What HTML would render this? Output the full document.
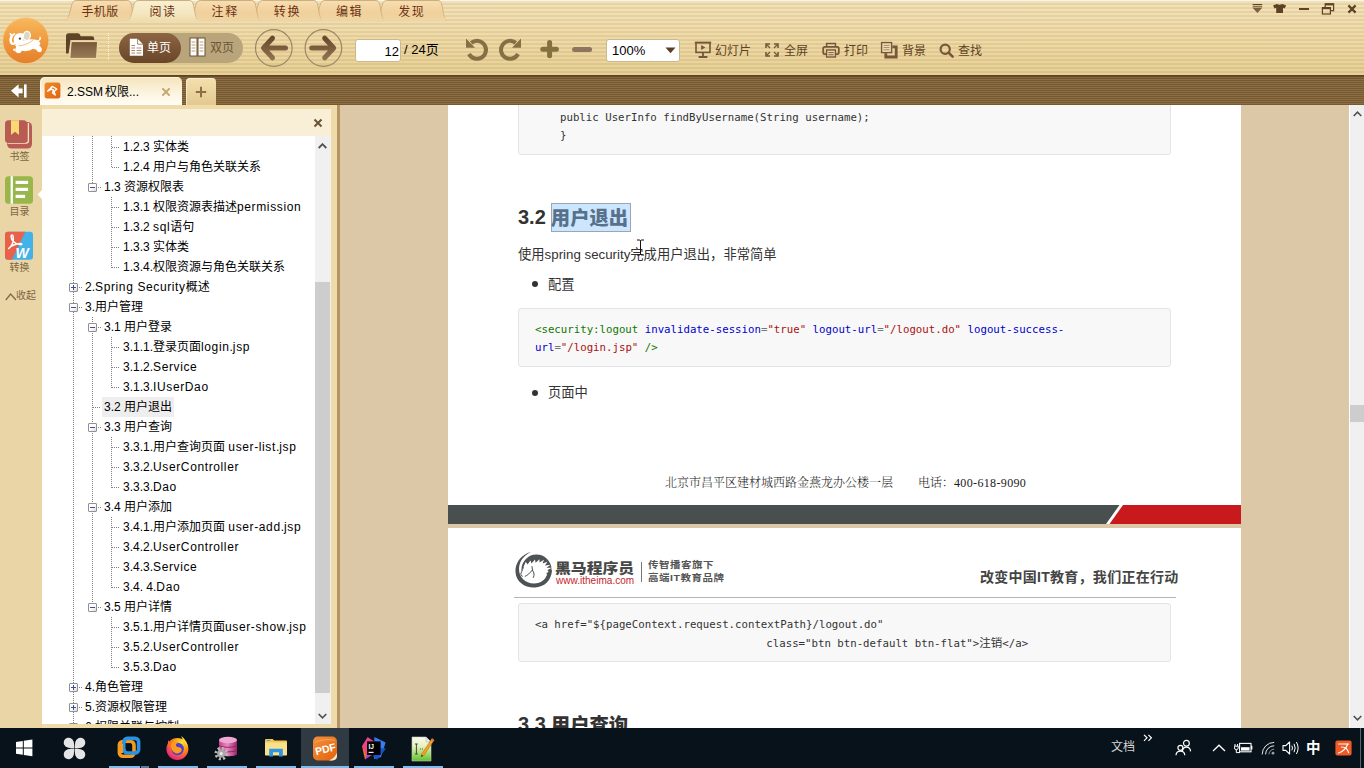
<!DOCTYPE html>
<html lang="zh-CN">
<head>
<meta charset="utf-8">
<title>2.SSM权限</title>
<style>
*{box-sizing:border-box;margin:0;padding:0}
html,body{width:1364px;height:768px;overflow:hidden;background:#dcc7a6}
body{position:relative;font-family:"Liberation Sans","Noto Sans CJK SC",sans-serif;font-size:13px;color:#000}
.abs{position:absolute}
/* ---------- top toolbar ---------- */
#toolbar{position:absolute;left:0;top:0;width:1364px;height:75px;
 background:
  linear-gradient(180deg,#f9f5e6 0,#f9f5e6 1px,transparent 1px),
  repeating-linear-gradient(180deg,rgba(255,255,255,.13) 0,rgba(255,255,255,.13) 2px,rgba(170,115,20,.09) 2px,rgba(170,115,20,.09) 4px) 0 1px,
  linear-gradient(180deg,#efdeb2 0,#ecd8a7 25px,#e7d097 55px,#e2c98c 75px);}
#tabbar{position:absolute;left:0;top:75px;width:1364px;height:30px;
 background:
  linear-gradient(180deg,#5e4420 0,#5e4420 1px,rgba(94,68,32,.35) 2px,transparent 3px),
  repeating-linear-gradient(180deg,#8b6e46 0,#8b6e46 1px,#77592f 1px,#77592f 2px);}
.mtab{position:absolute;top:0;height:21px;width:70px;font-size:13px;color:#6a3517;text-align:center;line-height:22px;letter-spacing:.5px}
.mtab svg{position:absolute;left:0;top:0}
.mtab span{position:relative}
.mt{position:absolute;top:3px;width:60px;height:18px;line-height:18px;text-align:center;font-size:12px;color:#6b3313;letter-spacing:.3px;white-space:nowrap}
.tl{position:absolute;top:42px;height:18px;line-height:18px;font-size:12px;color:#5e4224;white-space:nowrap}
/* ---------- left ---------- */
#side{position:absolute;left:0;top:105px;width:42px;height:623px;background:#e9d5a5}
#panelwrap{position:absolute;left:42px;top:105px;width:295px;height:623px;background:#efdba9}
#phead{position:absolute;left:0;top:4px;width:289px;height:27px;background:#f9efd6}
#tree{position:absolute;left:0;top:31px;width:289px;height:588px;background:#fff;overflow:hidden}
#split{position:absolute;left:337px;top:105px;width:3px;height:623px;background:#b59463}
.ti{position:absolute;height:20px;line-height:20px;font-size:13px;white-space:nowrap;color:#000;font-family:"Liberation Sans","Noto Sans CJK SC",sans-serif}

.vl{position:absolute;width:1px;background:repeating-linear-gradient(180deg,#808080 0,#808080 1px,transparent 1px,transparent 2px)}
.hl{position:absolute;height:1px;background:repeating-linear-gradient(90deg,#808080 0,#808080 1px,transparent 1px,transparent 2px)}
.bx{position:absolute;width:9px;height:9px;border:1px solid #919191;border-radius:1px;background:linear-gradient(135deg,#fff 0,#fff 50%,#d8d8d8 100%)}
.bx .mh{position:absolute;left:1px;top:3px;width:5px;height:1px;background:#3b4ea0}
.bx .mv{position:absolute;left:3px;top:1px;width:1px;height:5px;background:#3b4ea0}
.ti{font-size:12px}
.la{letter-spacing:.62px}
.ti.sel{background:#eee;margin-left:-2px;padding:0 2px}
.sb{position:absolute;background:#f0f0f0}
.sb .th{position:absolute;background:#cdcdcd}
.sl{position:absolute;left:0;width:39px;text-align:center;font-size:10px;line-height:16px;color:#7d6444;white-space:nowrap}
/* ---------- doc ---------- */
#doc{position:absolute;left:340px;top:105px;width:1008px;height:623px;background:#dcc7a6;overflow:hidden}
#vscroll{position:absolute;left:1349px;top:105px;width:15px;height:623px;background:#f0f0f0;border-left:1px solid #fff}

/* doc contents (screen coords via body-relative abs) */
.page{position:absolute;left:448px;width:793px;background:#fff}
.code{position:absolute;left:518px;width:653px;background:#f8f8f8;border:1px solid #e2e4e6;border-radius:3px}
.cl{position:absolute;font-family:"DejaVu Sans Mono","Liberation Mono","Noto Sans CJK SC",monospace;font-size:10.73px;line-height:18px;height:18px;white-space:pre;color:#333}
.eq{color:#777}.tg{color:#117700}.at{color:#0000cc}.st{color:#aa1111}
.p{position:absolute;font-size:13.3px;line-height:20px;height:20px;color:#333;white-space:nowrap;font-family:"Liberation Sans","Noto Sans CJK SC",sans-serif}
.h2{position:absolute;font-size:20px;line-height:28px;height:28px;font-weight:bold;color:#333;white-space:nowrap;font-family:"Liberation Sans","Noto Sans CJK SC",sans-serif}
.ft{height:16px;line-height:16px;font-size:12px;font-weight:300;color:#1a1a1a;white-space:pre;font-family:"Liberation Serif","Noto Serif CJK SC",serif}
.dot{position:absolute;width:6px;height:6px;border-radius:50%;background:#333}
/* ---------- taskbar ---------- */
.ul{position:absolute;top:38px;height:2px;background:#7dbcee}
#taskbar{position:absolute;left:0;top:728px;width:1364px;height:40px;background:#08121b}
</style>
</head>
<body>
<div id="toolbar">
<svg class="abs" style="left:0;top:0" width="460" height="23" viewBox="0 0 460 23">
<defs><linearGradient id="tgi" x1="0" y1="0" x2="0" y2="1"><stop offset="0" stop-color="#f7deb2"/><stop offset=".55" stop-color="#f1d09c"/><stop offset="1" stop-color="#edd6a4"/></linearGradient>
<linearGradient id="tga" x1="0" y1="0" x2="0" y2="1"><stop offset="0" stop-color="#f9f0d2"/><stop offset=".6" stop-color="#f4e6c0"/><stop offset="1" stop-color="#efdcac"/></linearGradient>
<linearGradient id="tgs" x1="0" y1="0" x2="0" y2="1"><stop offset="0" stop-color="#c9a773"/><stop offset=".7" stop-color="#c9a773" stop-opacity=".8"/><stop offset="1" stop-color="#c9a773" stop-opacity="0"/></linearGradient></defs>
<path d="M374.7,21.5 C378.2,21 379.2,16 380.7,11 C382.2,5 382.7,0.5 386.7,0.5 L438.0,0.5 C441.5,0.5 442.0,5 443.0,11 C444.0,16 445.0,21 448.0,21.5 Z" fill="url(#tgi)" stroke="url(#tgs)" stroke-width=".9"/>
<path d="M312.6,21.5 C316.1,21 317.1,16 318.6,11 C320.1,5 320.6,0.5 324.6,0.5 L375.9,0.5 C379.4,0.5 379.9,5 380.9,11 C381.9,16 382.9,21 385.9,21.5 Z" fill="url(#tgi)" stroke="url(#tgs)" stroke-width=".9"/>
<path d="M250.5,21.5 C254.0,21 255.0,16 256.5,11 C258.0,5 258.5,0.5 262.5,0.5 L313.8,0.5 C317.3,0.5 317.8,5 318.8,11 C319.8,16 320.8,21 323.8,21.5 Z" fill="url(#tgi)" stroke="url(#tgs)" stroke-width=".9"/>
<path d="M188.4,21.5 C191.9,21 192.9,16 194.4,11 C195.9,5 196.4,0.5 200.4,0.5 L251.7,0.5 C255.2,0.5 255.7,5 256.7,11 C257.7,16 258.7,21 261.7,21.5 Z" fill="url(#tgi)" stroke="url(#tgs)" stroke-width=".9"/>
<path d="M64.2,21.5 C67.7,21 68.7,16 70.2,11 C71.7,5 72.2,0.5 76.2,0.5 L127.5,0.5 C131.0,0.5 131.5,5 132.5,11 C133.5,16 134.5,21 137.5,21.5 Z" fill="url(#tgi)" stroke="url(#tgs)" stroke-width=".9"/>
<path d="M126.30000000000001,21.5 C129.8,21 130.8,16 132.3,11 C133.8,5 134.3,0.5 138.3,0.5 L189.6,0.5 C193.1,0.5 193.6,5 194.6,11 C195.6,16 196.6,21 199.6,21.5 Z" fill="url(#tga)" stroke="url(#tgs)" stroke-width=".9"/>
</svg>
<div class="mt" style="left:70.0px">手机版</div>
<div class="mt" style="left:132.2px;letter-spacing:1.6px;text-indent:1.6px">阅读</div>
<div class="mt" style="left:194.4px;letter-spacing:1.6px;text-indent:1.6px">注释</div>
<div class="mt" style="left:256.6px;letter-spacing:1.6px;text-indent:1.6px">转换</div>
<div class="mt" style="left:318.8px;letter-spacing:1.6px;text-indent:1.6px">编辑</div>
<div class="mt" style="left:381.0px;letter-spacing:1.6px;text-indent:1.6px">发现</div>
<!-- elephant logo -->
<svg class="abs" style="left:1px;top:15px" width="50" height="51" viewBox="0 0 50 51">
 <defs><linearGradient id="eg" x1="0" y1="0" x2="0" y2="1"><stop offset="0" stop-color="#f7b95c"/><stop offset=".5" stop-color="#f09a3e"/><stop offset="1" stop-color="#e4802c"/></linearGradient></defs>
 <circle cx="24.8" cy="25.6" r="23.6" fill="#f3c88a" opacity=".55"/>
 <circle cx="24.8" cy="25.6" r="22.6" fill="url(#eg)"/>
 <g fill="#fff">
  <ellipse cx="17.6" cy="24.8" rx="5" ry="5.6"/>
  <path d="M14,20.6 C15.5,18 19,17.4 22,18.6 L22,24 Z"/>
  <path d="M14,30.5 C17,27 24,24.5 30,24.2 C34,24 37.5,25 39,27.5 C40,29.5 38,31 36,31.5 L30,34.8 C26,36.8 21.5,36.4 19,35 Z"/>
  <path d="M16.4,30.6 C14.6,32.4 13.6,34.6 14.6,36.6 C15.6,38.4 18.6,38.8 19.8,37.6 C20.4,36 21.8,34.6 24,33.6 Z"/>
  <path d="M33.6,29 C36.4,29 38.4,30.4 39.8,32 C41.4,34 41.2,36.4 39.6,37 C37.8,37.6 36,36.4 35.4,34.8 L31,33.4 Z"/>
  <path d="M13.4,33.4 C12.2,33.2 11.6,34.4 12.4,35.4 L15,36.4 Z"/>
 </g>
 <path d="M13.6,28.6 C9.4,29.6 8.6,24.8 10.9,20.6" fill="none" stroke="#fff" stroke-width="2.5" stroke-linecap="round"/>
 <path d="M11,20.8 L9.3,18.9 M11,20.8 L13.2,19" fill="none" stroke="#fff" stroke-width="1.7" stroke-linecap="round"/>
 <path d="M36.8,26 C38.8,25.2 39.8,23.8 39,22.4" fill="none" stroke="#fff" stroke-width="1.5" stroke-linecap="round"/>
 <ellipse cx="25.8" cy="20.9" rx="3.5" ry="4.5" fill="#ddd5c6" stroke="#fff" stroke-width="1.3" transform="rotate(10 25.8 20.9)"/>
 <circle cx="18.9" cy="23.7" r="1.15" fill="#5a4630"/>
 <path d="M17.5,30.8 C22,30.8 28,28.6 32.5,24.6" fill="none" stroke="#f0a04a" stroke-width=".7"/>
</svg>
<!-- folder -->
<svg class="abs" style="left:64px;top:31px" width="36" height="30" viewBox="0 0 36 30">
 <defs><linearGradient id="fg" x1="0" y1="0" x2="0" y2="1"><stop offset="0" stop-color="#76583a"/><stop offset="1" stop-color="#9b7c58"/></linearGradient></defs>
 <path d="M2,22.5 V5 Q2,2.2 4.8,2.2 H14 Q15.6,2.2 16.2,4 L16.6,5.2 H28 Q30.2,5.2 30.2,7.4 V9 H6.5 L4.6,22.5 Z" fill="#5f4329"/>
 <path d="M7.2,10.6 H33.6 L32.6,27.4 H5.8 Z" fill="url(#fg)" stroke="#f1dfb2" stroke-width="1"/>
</svg>
<div class="abs" style="left:108px;top:33px;width:1px;height:27px;background:repeating-linear-gradient(180deg,#fbf3da 0,#fbf3da 1px,transparent 1px,transparent 2px)"></div>
<!-- single / double page pill -->
<div class="abs" style="left:119px;top:33px;width:124px;height:30px;border-radius:15px;background:#b9a57c"></div>
<div class="abs" style="left:119px;top:33px;width:62px;height:30px;border-radius:15px;background:linear-gradient(180deg,#8d6644 0,#7a5536 50%,#6a4628 100%)"></div>
<svg class="abs" style="left:129px;top:38px" width="15" height="19" viewBox="0 0 15 19"><path d="M0.8,0.8 H8.6 L14,6.2 V17.8 H0.8 Z" fill="#fff"/><path d="M8.6,0.8 V6.2 H14" fill="none" stroke="#8b6645" stroke-width=".8"/><g stroke="#a88a6a" stroke-width="1"><path d="M2.4,7.5 H6 M2.4,10 H6 M2.4,12.5 H6 M2.4,15 H6 M7.6,10 H12.4 M7.6,12.5 H12.4 M7.6,15 H12.4"/></g></svg>
<div class="abs" style="left:147px;top:39px;font-size:12px;line-height:18px;color:#fff;white-space:nowrap">单页</div>
<svg class="abs" style="left:189px;top:37px" width="17" height="20" viewBox="0 0 17 20"><rect x="1" y="1" width="7" height="18" fill="#fff" stroke="#6d5030" stroke-width="1"/><rect x="9" y="1" width="7" height="18" fill="#fff" stroke="#6d5030" stroke-width="1"/><g stroke="#b89c7a" stroke-width="1"><path d="M2.6,5 H6.4 M2.6,8 H6.4 M2.6,11 H6.4 M2.6,14 H6.4 M10.6,5 H14.4 M10.6,8 H14.4 M10.6,11 H14.4 M10.6,14 H14.4"/></g></svg>
<div class="abs" style="left:210px;top:39px;font-size:12px;line-height:18px;color:#6b5536;white-space:nowrap">双页</div>
<!-- back / forward -->
<svg class="abs" style="left:253px;top:28px" width="92" height="40" viewBox="0 0 92 40">
 <defs><linearGradient id="ag" x1="0" y1="0" x2="0" y2="1"><stop offset="0" stop-color="#6a4a2e"/><stop offset="1" stop-color="#8e7050"/></linearGradient></defs>
 <circle cx="20.8" cy="20" r="18.3" fill="none" stroke="#9c8664" stroke-width="1.2"/>
 <circle cx="70.4" cy="20" r="18.3" fill="none" stroke="#9c8664" stroke-width="1.2"/>
 <path d="M32.5,20 H12 M19.5,10.2 L10.5,20 L19.5,29.8" fill="none" stroke="url(#ag)" stroke-width="5" stroke-linecap="round" stroke-linejoin="round"/>
 <path d="M58.7,20 H79.2 M71.7,10.2 L80.7,20 L71.7,29.8" fill="none" stroke="url(#ag)" stroke-width="5" stroke-linecap="round" stroke-linejoin="round"/>
</svg>
<!-- page input -->
<div class="abs" style="left:355px;top:39px;width:46px;height:23px;background:#fff;border:1px solid #cbb98e;border-radius:3px"></div>
<div class="abs" style="left:355px;top:43px;width:44px;text-align:right;font-size:13px;line-height:18px;color:#000">12</div>
<div class="abs" style="left:404px;top:41px;font-size:13px;line-height:18px;color:#000;white-space:nowrap">/ 24页</div>
<!-- rotate, plus, minus -->
<svg class="abs" style="left:463px;top:36px" width="132" height="28" viewBox="0 0 132 28">
 <g fill="none" stroke="#857045" stroke-width="4">
  <path d="M6,18 A9,9 0 1 0 8.2,6.9"/>
  <path d="M55,18 A9,9 0 1 1 52.8,6.9"/>
 </g>
 <polygon points="3,2.6 3,11.8 12,11.8" fill="#857045"/>
 <polygon points="58,2.6 58,11.8 49,11.8" fill="#857045"/>
 <path d="M86.6,6.6 V19.8 M79.8,13.2 H93.4" stroke="#857040" stroke-width="5" stroke-linecap="round" fill="none"/>
 <path d="M111.6,13.6 H126.6" stroke="#8d765c" stroke-width="5" stroke-linecap="round" fill="none"/>
</svg>
<!-- zoom select -->
<div class="abs" style="left:606px;top:39px;width:74px;height:23px;background:#fff;border:1px solid #cbb98e;border-radius:3px"></div>
<div class="abs" style="left:612px;top:42px;font-size:13px;line-height:18px;color:#000;white-space:nowrap">100%</div>
<svg class="abs" style="left:665px;top:47px" width="11" height="7" viewBox="0 0 11 7"><polygon points="0.5,0.5 10.5,0.5 5.5,6.2" fill="#5a3f22"/></svg>
<!-- right tools -->
<svg class="abs" style="left:694px;top:41px" width="18" height="18" viewBox="0 0 18 18"><rect x="2" y="1.6" width="14" height="9.8" fill="none" stroke="#76573a" stroke-width="1.6"/><path d="M0.8,1.6 H17.2" stroke="#76573a" stroke-width="1.6"/><polygon points="7.2,4 7.2,9 11.4,6.5" fill="#76573a"/><path d="M9,11.4 V15.6 M4.6,16 H13.4" stroke="#76573a" stroke-width="1.8"/></svg>
<div class="tl" style="left:715px">幻灯片</div>
<svg class="abs" style="left:765px;top:43px" width="14" height="14" viewBox="0 0 14 14"><g fill="none" stroke="#76573a" stroke-width="1.6"><path d="M1,5 V1 H5 M9,1 H13 V5 M13,9 V13 H9 M5,13 H1 V9"/><path d="M1.5,1.5 L5,5 M12.5,1.5 L9,5 M12.5,12.5 L9,9 M1.5,12.5 L5,9" stroke-width="1.3"/></g></svg>
<div class="tl" style="left:784px">全屏</div>
<svg class="abs" style="left:822px;top:42px" width="18" height="16" viewBox="0 0 18 16"><path d="M4.6,5 V1.4 H13.4 V5" fill="none" stroke="#76573a" stroke-width="1.5"/><rect x="1.2" y="4.8" width="15.6" height="7.4" rx="1.6" fill="none" stroke="#76573a" stroke-width="1.8"/><rect x="4.6" y="8" width="8.8" height="7" fill="#ecd9a8" stroke="#76573a" stroke-width="1.4"/><path d="M6.4,10.6 H11.6 M6.4,12.8 H11.6" stroke="#76573a" stroke-width="1"/></svg>
<div class="tl" style="left:844px">打印</div>
<svg class="abs" style="left:880px;top:41px" width="18" height="18" viewBox="0 0 18 18"><path d="M5.8,12.2 V16 H16.2 V5.8 H12.4" fill="none" stroke="#76573a" stroke-width="2.8"/><rect x="1.6" y="1.6" width="10" height="10" fill="#f0dfb4" stroke="#76573a" stroke-width="1.4"/><path d="M3.6,4.4 H9.6 M3.6,6.6 H9.6 M3.6,8.8 H9.6" stroke="#9a7f5e" stroke-width=".9"/></svg>
<div class="tl" style="left:902px">背景</div>
<svg class="abs" style="left:939px;top:43px" width="15" height="15" viewBox="0 0 15 15"><circle cx="6.2" cy="6.2" r="4.6" fill="none" stroke="#76573a" stroke-width="2.2"/><path d="M9.6,9.6 L13.6,13.6" stroke="#76573a" stroke-width="2.6" stroke-linecap="round"/></svg>
<div class="tl" style="left:958px">查找</div>
<!-- window controls -->
<svg class="abs" style="left:1250px;top:2px" width="110" height="14" viewBox="0 0 110 14">
 <g fill="#5e4224"><rect x="2.6" y="2" width="9.6" height="1.2"/><rect x="2.6" y="4.2" width="9.6" height="1.2" opacity=".85"/><polygon points="2.8,6 12,6 7.4,11" opacity=".8"/>
 <path d="M26.8,2 L23,3.6 L24.6,6.4 L26.2,5.8 V11 H33 V5.8 L34.6,6.4 L36.2,3.6 L32.4,2 Q29.6,3.6 26.8,2 Z"/>
 <rect x="49" y="6" width="10" height="2"/>
 <rect x="97.6" y="0" width="0" height="0"/></g>
 <g fill="none" stroke="#5e4224"><path d="M75.2,5 V1.8 H83.6 V8.6 H80.6" stroke-width="1.2"/><path d="M75.2,2.4 H83.6" stroke-width="2"/><rect x="72.4" y="5.6" width="8" height="6.4" stroke-width="1.2"/><path d="M72.4,6.2 H80.4" stroke-width="2"/><path d="M98.4,3.4 L105.6,10.6 M105.6,3.4 L98.4,10.6" stroke-width="2.2"/></g>
</svg>
</div>
<div id="tabbar">
<svg class="abs" style="left:10px;top:8px" width="18" height="16" viewBox="0 0 18 16"><polygon points="1,7.8 8.6,1.2 8.6,5.4 12.6,5.4 12.6,10.2 8.6,10.2 8.6,14.4" fill="#fff"/><rect x="14" y="1.4" width="2.6" height="13.2" fill="#fff"/></svg>
<div class="abs" style="left:40px;top:2px;width:142px;height:28px;border-radius:5px 5px 0 0;background:linear-gradient(180deg,#f5e3ba 0,#f9eed2 35%,#fdf7e8 70%,#fffcf4 100%);box-shadow:inset 1px 1px 0 rgba(255,255,255,.5)"></div>
<svg class="abs" style="left:44px;top:7px" width="17" height="17" viewBox="0 0 17 17"><defs><linearGradient id="pg" x1="0" y1="0" x2="1" y2="1"><stop offset="0" stop-color="#f08a2c"/><stop offset="1" stop-color="#e0620c"/></linearGradient></defs><rect x="0.6" y="0.6" width="15.8" height="15.8" rx="2.6" fill="url(#pg)"/><path d="M3.6,9.2 L8.2,4.4 L12.8,7 L10,9.6 L11.2,13 L8.6,11 L9.4,8 L7.4,7.2 Z" fill="none" stroke="#fff" stroke-width="1.4" stroke-linejoin="round"/></svg>
<div class="abs" style="left:67px;top:8px;font-size:12px;line-height:18px;color:#000;white-space:nowrap">2.SSM<span style="margin-left:2px">权限...</span></div>
<svg class="abs" style="left:161px;top:12px" width="10" height="10" viewBox="0 0 10 10"><path d="M1.4,1.4 L8.6,8.6 M8.6,1.4 L1.4,8.6" stroke="#c3a56a" stroke-width="2" fill="none"/></svg>
<div class="abs" style="left:186px;top:3px;width:30px;height:27px;border-radius:4px 4px 0 0;background:linear-gradient(180deg,#f3e0ae 0,#ead29c 60%,#e3c98f 100%);box-shadow:inset 1px 1px 0 rgba(255,255,255,.45)"></div>
<svg class="abs" style="left:195px;top:11px" width="12" height="12" viewBox="0 0 12 12"><path d="M6,0.8 V11.2 M0.8,6 H11.2" stroke="#8c6f44" stroke-width="2" fill="none"/></svg>
</div>
<div id="side">
<svg class="abs" style="left:4px;top:14px" width="30" height="31" viewBox="0 0 30 31">
 <rect x="3" y="3" width="25" height="26.5" rx="4.5" fill="#b85b52"/>
 <path d="M3.5,24.2 H22 Q24.4,24.2 24.4,21.8 V4" fill="none" stroke="#f3e6c6" stroke-width="1.3"/>
 <rect x="1" y="1.3" width="22" height="22.6" rx="3.5" fill="#b85b52"/>
 <polygon points="7,1.3 15,1.3 15,16 11,12.8 7,16" fill="#f9d973"/>
</svg>
<div class="sl" style="top:44px">书签</div>
<svg class="abs" style="left:4px;top:70px" width="30" height="30" viewBox="0 0 30 30">
 <rect x="1" y="1.2" width="28" height="27.6" rx="3.5" fill="#98b649"/>
 <rect x="6.6" y="1.2" width="2.3" height="27.6" fill="#fff"/>
 <rect x="11.6" y="5.8" width="12.5" height="3.2" fill="#fff"/>
 <rect x="11.6" y="12.8" width="12.5" height="3.2" fill="#fff"/>
 <rect x="11.6" y="19.8" width="9.5" height="3.2" fill="#fff"/>
</svg>
<div class="sl" style="top:99px">目录</div>
<svg class="abs" style="left:4px;top:126px" width="30" height="30" viewBox="0 0 30 30">
 <defs><clipPath id="cvc"><rect x="1" y="0.8" width="28" height="28" rx="3"/></clipPath></defs>
 <g clip-path="url(#cvc)"><rect x="0" y="0" width="30" height="30" fill="#42b2e9"/><polygon points="0,0 21.5,0 7.5,30 0,30" fill="#e9614b"/></g>
 <path d="M4.6,17.6 C7.5,15.6 10.2,10.5 9.2,5.6 C8.8,3.6 7,3.5 7.1,5.5 C7.4,9.5 10.5,12.6 16,13.6 C18.5,14 18.4,12.4 16,12.5 C12,12.7 7.5,14.6 4.6,17.6 Z" fill="none" stroke="#fff" stroke-width="1.5" stroke-linejoin="round"/>
 <text x="11.5" y="26.5" font-family="Liberation Sans,sans-serif" font-size="14" font-weight="bold" font-style="italic" fill="#fff">W</text>
</svg>
<div class="sl" style="top:155px">转换</div>
<svg class="abs" style="left:5px;top:187px" width="12" height="10" viewBox="0 0 12 10"><path d="M0.8,8 L5.6,2 L11,8" fill="none" stroke="#7d6a48" stroke-width="1.3"/></svg>
<div class="sl" style="top:183px;left:16px;width:20px;text-align:left">收起</div>
</div>
<svg class="abs" style="left:37px;top:189px" width="6" height="11" viewBox="0 0 6 11"><polygon points="6,0 0.5,5.5 6,11" fill="#fff"/></svg>
<div id="panelwrap"><div id="phead"><svg class="abs" style="left:271px;top:9px" width="10" height="10" viewBox="0 0 10 10"><path d="M1.5,1.5 L8.5,8.5 M8.5,1.5 L1.5,8.5" stroke="#6b5435" stroke-width="2" fill="none"/></svg></div><div id="tree">
<i class="vl" style="left:31px;top:0px;height:588px"></i>
<i class="vl" style="left:50px;top:0px;height:51px"></i>
<i class="vl" style="left:50px;top:181px;height:290px"></i>
<i class="vl" style="left:69px;top:0px;height:32px"></i>
<i class="vl" style="left:69px;top:61px;height:71px"></i>
<i class="vl" style="left:69px;top:201px;height:51px"></i>
<i class="vl" style="left:69px;top:301px;height:51px"></i>
<i class="vl" style="left:69px;top:381px;height:71px"></i>
<i class="vl" style="left:69px;top:481px;height:51px"></i>
<i class="hl" style="left:70px;top:11px;width:8px"></i>
<div class="ti" style="left:81px;top:1px">1.2.3 实体类</div>
<i class="hl" style="left:70px;top:31px;width:8px"></i>
<div class="ti" style="left:81px;top:21px">1.2.4 用户与角色关联关系</div>
<i class="bx" style="left:46px;top:47px"><b class="mh"></b></i>
<i class="hl" style="left:56px;top:51px;width:4px"></i>
<div class="ti" style="left:62px;top:41px">1.3 资源权限表</div>
<i class="hl" style="left:70px;top:71px;width:8px"></i>
<div class="ti" style="left:81px;top:61px">1.3.1 权限资源表描述<span class="la">permission</span></div>
<i class="hl" style="left:70px;top:91px;width:8px"></i>
<div class="ti" style="left:81px;top:81px">1.3.2 <span class="la">sql</span>语句</div>
<i class="hl" style="left:70px;top:111px;width:8px"></i>
<div class="ti" style="left:81px;top:101px">1.3.3 实体类</div>
<i class="hl" style="left:70px;top:131px;width:8px"></i>
<div class="ti" style="left:81px;top:121px">1.3.4.权限资源与角色关联关系</div>
<i class="bx" style="left:27px;top:147px"><b class="mh"></b><b class="mv"></b></i>
<i class="hl" style="left:37px;top:151px;width:4px"></i>
<div class="ti" style="left:43px;top:141px">2.<span class="la">Spring Security</span>概述</div>
<i class="bx" style="left:27px;top:167px"><b class="mh"></b></i>
<i class="hl" style="left:37px;top:171px;width:4px"></i>
<div class="ti" style="left:43px;top:161px">3.用户管理</div>
<i class="bx" style="left:46px;top:187px"><b class="mh"></b></i>
<i class="hl" style="left:56px;top:191px;width:4px"></i>
<div class="ti" style="left:62px;top:181px">3.1 用户登录</div>
<i class="hl" style="left:70px;top:211px;width:8px"></i>
<div class="ti" style="left:81px;top:201px">3.1.1.登录页面<span class="la">login</span>.<span class="la">jsp</span></div>
<i class="hl" style="left:70px;top:231px;width:8px"></i>
<div class="ti" style="left:81px;top:221px">3.1.2.<span class="la">Service</span></div>
<i class="hl" style="left:70px;top:251px;width:8px"></i>
<div class="ti" style="left:81px;top:241px">3.1.3.<span class="la">IUserDao</span></div>
<i class="hl" style="left:51px;top:271px;width:8px"></i>
<div class="ti sel" style="left:62px;top:261px">3.2 用户退出</div>
<i class="bx" style="left:46px;top:287px"><b class="mh"></b></i>
<i class="hl" style="left:56px;top:291px;width:4px"></i>
<div class="ti" style="left:62px;top:281px">3.3 用户查询</div>
<i class="hl" style="left:70px;top:311px;width:8px"></i>
<div class="ti" style="left:81px;top:301px">3.3.1.用户查询页面 <span class="la">user-list</span>.<span class="la">jsp</span></div>
<i class="hl" style="left:70px;top:331px;width:8px"></i>
<div class="ti" style="left:81px;top:321px">3.3.2.<span class="la">UserController</span></div>
<i class="hl" style="left:70px;top:351px;width:8px"></i>
<div class="ti" style="left:81px;top:341px">3.3.3.<span class="la">Dao</span></div>
<i class="bx" style="left:46px;top:367px"><b class="mh"></b></i>
<i class="hl" style="left:56px;top:371px;width:4px"></i>
<div class="ti" style="left:62px;top:361px">3.4 用户添加</div>
<i class="hl" style="left:70px;top:391px;width:8px"></i>
<div class="ti" style="left:81px;top:381px">3.4.1.用户添加页面 <span class="la">user-add</span>.<span class="la">jsp</span></div>
<i class="hl" style="left:70px;top:411px;width:8px"></i>
<div class="ti" style="left:81px;top:401px">3.4.2.<span class="la">UserController</span></div>
<i class="hl" style="left:70px;top:431px;width:8px"></i>
<div class="ti" style="left:81px;top:421px">3.4.3.<span class="la">Service</span></div>
<i class="hl" style="left:70px;top:451px;width:8px"></i>
<div class="ti" style="left:81px;top:441px">3.4. 4.<span class="la">Dao</span></div>
<i class="bx" style="left:46px;top:467px"><b class="mh"></b></i>
<i class="hl" style="left:56px;top:471px;width:4px"></i>
<div class="ti" style="left:62px;top:461px">3.5 用户详情</div>
<i class="hl" style="left:70px;top:491px;width:8px"></i>
<div class="ti" style="left:81px;top:481px">3.5.1.用户详情页面<span class="la">user-show</span>.<span class="la">jsp</span></div>
<i class="hl" style="left:70px;top:511px;width:8px"></i>
<div class="ti" style="left:81px;top:501px">3.5.2.<span class="la">UserController</span></div>
<i class="hl" style="left:70px;top:531px;width:8px"></i>
<div class="ti" style="left:81px;top:521px">3.5.3.<span class="la">Dao</span></div>
<i class="bx" style="left:27px;top:547px"><b class="mh"></b><b class="mv"></b></i>
<i class="hl" style="left:37px;top:551px;width:4px"></i>
<div class="ti" style="left:43px;top:541px">4.角色管理</div>
<i class="bx" style="left:27px;top:567px"><b class="mh"></b><b class="mv"></b></i>
<i class="hl" style="left:37px;top:571px;width:4px"></i>
<div class="ti" style="left:43px;top:561px">5.资源权限管理</div>
<i class="bx" style="left:27px;top:587px"><b class="mh"></b><b class="mv"></b></i>
<i class="hl" style="left:37px;top:591px;width:4px"></i>
<div class="ti" style="left:43px;top:581px">6.权限关联与控制</div>
<div class="sb" style="left:273px;top:0;width:16px;height:588px"><div class="th" style="left:0;top:146px;width:15px;height:411px"></div>
<svg class="abs" style="left:3px;top:7px" width="9" height="6" viewBox="0 0 9 6"><path d="M0.7,5 L4.5,1.2 L8.3,5" fill="none" stroke="#505050" stroke-width="1.8"/></svg>
<svg class="abs" style="left:3px;top:577px" width="9" height="6" viewBox="0 0 9 6"><path d="M0.7,1 L4.5,4.8 L8.3,1" fill="none" stroke="#505050" stroke-width="1.6"/></svg></div>
</div></div>
<div id="split"></div>
<div id="doc"></div>

<!-- document pages -->
<div class="abs" style="left:0;top:105px;width:1349px;height:623px;overflow:hidden"><div class="abs" style="left:0;top:-105px;width:1364px;height:768px">
<div class="page" style="top:105px;height:400px"></div>
<div class="abs" style="left:448px;top:505px;width:793px;height:19px;background:#494e4e"></div>
<svg class="abs" style="left:1098px;top:505px" width="143" height="19" viewBox="0 0 143 19"><polygon points="21.5,0 143,0 143,19 8,19" fill="#fff"/><polygon points="25,0 143,0 143,19 11.5,19" fill="#c8191d"/></svg>
<div class="page" style="top:528px;height:200px"></div>

<div class="code" style="top:95px;height:60px"></div>
<div class="cl" style="left:560px;top:109px">public UserInfo findByUsername(String username);</div>
<div class="cl" style="left:560px;top:127px">}</div>

<div class="abs" style="left:551px;top:203px;width:80px;height:29px;background:#cce6ff;border:1px solid #9aa6b4"></div>
<div class="h2" style="left:518px;top:203px">3.2 <span style="color:#58718a;position:relative;top:1px;left:-.5px;font-size:19.3px;font-weight:900">用户退出</span></div>
<div class="p" style="left:518px;top:245px">使用spring security完成用户退出，非常简单</div>
<div class="dot" style="left:532px;top:281px"></div>
<div class="p" style="left:548px;top:275px">配置</div>

<div class="code" style="top:308px;height:59px"></div>
<div class="cl" style="left:535px;top:321px"><span class="tg">&lt;security:logout</span> <span class="at">invalidate-session</span><span class="eq">=</span><span class="st">"true"</span> <span class="at">logout-url</span><span class="eq">=</span><span class="st">"/logout.do"</span> <span class="at">logout-success-</span></div>
<div class="cl" style="left:535px;top:339px"><span class="at">url</span><span class="eq">=</span><span class="st">"/login.jsp"</span> <span class="tg">/&gt;</span></div>

<div class="dot" style="left:532px;top:390px"></div>
<div class="p" style="left:548px;top:383px">页面中</div>

<div class="abs ft" style="left:665px;top:475px">北京市昌平区建材城西路金燕龙办公楼一层</div>
<div class="abs ft" style="left:918px;top:475px">电话：<span style="letter-spacing:.35px">400-618-9090</span></div>

<!-- page 2 header -->
<svg class="abs" style="left:510px;top:546px" width="50" height="46" viewBox="0 0 50 46">
 <circle cx="26.5" cy="23.5" r="15" fill="#4d5254"/>
 <polygon fill="#fff" points="9,31 12.5,23 15.8,15.8 17.5,18.4 20.5,14.4 21.5,17.4 25,13.6 25.6,16.8 29.5,13.2 29.5,16.4 34,13.8 32.5,17.4 37.5,15.8 35,19.4 40.5,18.8 36.5,21.8 41.8,21.8 37.2,24.2 40.5,26 36.5,26.8 37,29 34,36 24,39.5 13,37"/>
 <path fill="#4d5254" d="M21,5.8 C10,9 5,18 5.5,26 C6,36 15,42 25,41.5 C34,41 41.5,35 42,24 L38.5,25 C37,33 31,37.5 24,37.5 C15,37.5 9,31 9,23 C9,16 13,10 21,5.8 Z"/>
 <path fill="none" stroke="#4d5254" stroke-width="1" stroke-linecap="round" d="M22,20.5 L22.4,24 C24.2,27 24.6,29 23.4,31.5 M22.4,24 C20,27 17.5,29.5 15.2,30.3 M13.3,21.5 C12.4,25 10.8,26.5 10.8,28.3 L12.3,30.3"/>
</svg>
<div class="abs" style="left:555px;top:557px;font-size:14px;line-height:20px;transform:scaleX(1.13);transform-origin:0 0;font-weight:900;color:#484848;white-space:nowrap;font-family:'Noto Sans CJK SC',sans-serif">黑马程序员</div>
<div class="abs" style="left:556px;top:574px;font-size:10.05px;line-height:14px;color:#c4262e;white-space:nowrap">www.itheima.com</div>
<div class="abs" style="left:641px;top:562px;width:1px;height:20px;background:#777"></div>
<div class="abs" style="left:648px;top:559px;font-size:9.3px;line-height:13px;font-weight:bold;color:#555;white-space:nowrap;letter-spacing:.45px;transform:scaleX(1.13);transform-origin:0 0">传智播客旗下</div>
<div class="abs" style="left:648px;top:572px;font-size:9.3px;line-height:13px;font-weight:bold;color:#555;white-space:nowrap;letter-spacing:.45px;transform:scaleX(1.13);transform-origin:0 0">高端IT教育品牌</div>
<div class="abs" style="left:980px;top:567px;font-size:14px;line-height:20px;font-weight:bold;color:#444;white-space:nowrap;letter-spacing:.27px">改变中国IT教育，我们正在行动</div>
<div class="abs" style="left:514px;top:597px;width:662px;height:1px;background:#b5b5b5"></div>

<div class="code" style="top:603px;height:59px"></div>
<div class="cl" style="left:535px;top:616px">&lt;a href="${pageContext.request.contextPath}/logout.do"</div>
<div class="cl" style="left:534px;top:634px">                                    class="btn btn-default btn-flat"&gt;<span style="font-size:11.5px">注销</span>&lt;/a&gt;</div>

<div class="h2" style="left:518px;top:710px">3.3 <span style="position:relative;top:1px;left:-.5px;font-size:19.3px;font-weight:900">用户查询</span></div>
</div></div>
<div id="vscroll"><div class="abs" style="left:0;top:300px;width:14px;height:17px;background:#cdcdcd"></div>
<svg class="abs" style="left:3px;top:6px" width="9" height="6" viewBox="0 0 9 6"><path d="M0.7,5 L4.5,1.2 L8.3,5" fill="none" stroke="#505050" stroke-width="1.6"/></svg>
<svg class="abs" style="left:3px;top:610px" width="9" height="6" viewBox="0 0 9 6"><path d="M0.7,1 L4.5,4.8 L8.3,1" fill="none" stroke="#505050" stroke-width="1.6"/></svg></div>
<svg class="abs" style="left:636px;top:239px" width="9" height="17" viewBox="0 0 9 17"><path d="M1,1 H3.4 Q4.5,1 4.5,2.4 Q4.5,1 5.6,1 H8 M4.5,2 V15 M1,16 H3.4 Q4.5,16 4.5,14.6 Q4.5,16 5.6,16 H8" fill="none" stroke="#111" stroke-width="1"/></svg>
<div id="taskbar">
<!-- active app bg -->
<div class="abs" style="left:301px;top:0;width:48px;height:40px;background:#2f3a43"></div>
<!-- underlines -->
<div class="ul" style="left:109px;width:31px"></div><div class="ul" style="left:140px;width:1px;background:#08121b"></div><div class="ul" style="left:141px;width:8px;background:#5b7c9c"></div>
<div class="ul" style="left:158px;width:40px"></div>
<div class="ul" style="left:207px;width:40px"></div>
<div class="ul" style="left:256px;width:40px"></div>
<div class="ul" style="left:301px;width:48px"></div>
<div class="ul" style="left:354px;width:40px"></div>
<div class="ul" style="left:403px;width:40px"></div>
<!-- windows logo -->
<svg class="abs" style="left:16px;top:11px" width="17" height="18" viewBox="0 0 17 18"><g fill="#fff"><polygon points="0,3 6.8,2 6.8,8.4 0,8.4"/><polygon points="7.8,1.8 16.4,0.5 16.4,8.4 7.8,8.4"/><polygon points="0,9.4 6.8,9.4 6.8,15.8 0,14.8"/><polygon points="7.8,9.4 16.4,9.4 16.4,17.3 7.8,16"/></g></svg>
<!-- fan -->
<svg class="abs" style="left:63px;top:9px" width="23" height="23" viewBox="0 0 23 23"><g fill="#e4e4e4"><path d="M11.2,11.2 C11.4,6.4 10.6,1.4 6.2,0.8 C2.6,0.4 0.4,3.2 0.8,6.2 C1.4,10 6,11.4 11.2,11.2 Z"/><path d="M11.8,11.2 C16.6,11.4 21.6,10.6 22.2,6.2 C22.6,2.6 19.8,0.4 16.8,0.8 C13,1.4 11.6,6 11.8,11.2 Z"/><path d="M11.8,11.8 C11.6,16.6 12.4,21.6 16.8,22.2 C20.4,22.6 22.6,19.8 22.2,16.8 C21.6,13 17,11.6 11.8,11.8 Z"/><path d="M11.2,11.8 C6.4,11.6 1.4,12.4 0.8,16.8 C0.4,20.4 3.2,22.6 6.2,22.2 C10,21.6 11.4,17 11.2,11.8 Z"/><circle cx="6" cy="6" r="4.6"/><circle cx="17" cy="6" r="4.6"/><circle cx="6" cy="17" r="4.6"/><circle cx="17" cy="17" r="4.6"/></g></svg>
<!-- vmware -->
<svg class="abs" style="left:117px;top:8px" width="24" height="24" viewBox="0 0 24 24"><rect x="2.4" y="5.6" width="14.6" height="14.6" rx="3.4" fill="none" stroke="#f59a1b" stroke-width="3.6"/><rect x="7" y="2.4" width="14.6" height="14.6" rx="3.4" fill="none" stroke="#2a93e4" stroke-width="3.6"/><path d="M4.2,8 V17" stroke="#f59a1b" stroke-width="3.6"/><rect x="8.6" y="7.2" width="5.6" height="5.6" fill="#08121b"/></svg>
<!-- firefox -->
<svg class="abs" style="left:165px;top:7px" width="25" height="26" viewBox="0 0 25 26"><defs><radialGradient id="ffg" cx=".7" cy=".2" r=".9"><stop offset="0" stop-color="#ffe226"/><stop offset=".45" stop-color="#ff8a16"/><stop offset="1" stop-color="#e31587"/></radialGradient></defs><circle cx="12.4" cy="14" r="11" fill="url(#ffg)"/><circle cx="12.6" cy="14" r="6.2" fill="#4a3fd0"/><path d="M6,9 C8,6.6 11,6.4 13,8 C11,8.6 10.4,10 11.4,11.2 C13,12.8 15.8,11.6 16.6,14 C17.2,16.4 14.8,18.6 12,18.4 C8.4,18.2 5.4,14.4 6,9 Z" fill="#ff9a1f"/><path d="M16,1 C19,3 22.6,7 22.8,12 C21.6,9 19.4,7.6 17.4,7.4 C18,5.4 17.4,3 16,1 Z" fill="#ffd43a"/><path d="M3.6,5 C4,6.4 4.6,7.4 5.6,8.2 C4.6,9.6 4.2,11 4.2,12.4 C2.6,10 2.6,7 3.6,5 Z" fill="#ff6a1a"/></svg>
<!-- db -->
<svg class="abs" style="left:214px;top:8px" width="24" height="26" viewBox="0 0 24 26"><defs><linearGradient id="dbg" x1="0" y1="0" x2="1" y2="0"><stop offset="0" stop-color="#c2408c"/><stop offset=".45" stop-color="#e88cc0"/><stop offset="1" stop-color="#9a2368"/></linearGradient></defs><path d="M5,4 V18 C5,21 23,21 23,18 V4 Z" fill="url(#dbg)"/><ellipse cx="14" cy="4" rx="9" ry="3.2" fill="#f0a8d2"/><path d="M5,9 C5,12 23,12 23,9 M5,13.6 C5,16.6 23,16.6 23,13.6" fill="none" stroke="#8a1c5c" stroke-width=".9"/><g transform="translate(7.2,17.6)"><circle r="5.2" fill="none" stroke="#b9b9b9" stroke-width="3" stroke-dasharray="2.1 1.98"/><circle r="4" fill="#a8a8a8"/><circle r="1.7" fill="#e8e8e8"/></g></svg>
<!-- explorer -->
<svg class="abs" style="left:264px;top:10px" width="24" height="20" viewBox="0 0 24 20"><path d="M1,2 Q1,1 2,1 H8.6 L10.2,2.6 H22 Q23,2.6 23,3.6 V17 H1 Z" fill="#f6c84c"/><rect x="1" y="4.4" width="22" height="13.2" rx=".8" fill="#fbe08c"/><path d="M5.2,18.4 V10.8 H18.8 V18.4 H15 V14.2 H9 V18.4 Z" fill="#2e94e6"/><rect x="2.4" y="2" width="4" height="1" fill="#4aa8ee"/></svg>
<!-- pdf app -->
<svg class="abs" style="left:312px;top:8px" width="26" height="25" viewBox="0 0 26 25"><defs><linearGradient id="pdg" x1="0" y1="0" x2="1" y2="1"><stop offset="0" stop-color="#f59038"/><stop offset="1" stop-color="#e2620e"/></linearGradient></defs><rect x="1" y="0.6" width="24" height="23.8" rx="4.6" fill="url(#pdg)"/><path d="M25,17 V19.8 Q25,24.4 20.4,24.4 H17 Q22,22.6 25,17 Z" fill="#f6e6d0"/><text x="3.2" y="17.2" font-family="Liberation Sans,sans-serif" font-size="10.5" font-weight="bold" fill="#fff" transform="rotate(-14 12 14)">PDF</text><path d="M3,6.4 C9,3.6 16,3 23,4.4" fill="none" stroke="#f8b070" stroke-width=".8"/></svg>
<!-- intellij -->
<svg class="abs" style="left:361px;top:8px" width="26" height="25" viewBox="0 0 26 25"><polygon points="1,10 6.6,1 13,5.4 6,21.6" fill="#f0418a"/><polygon points="1,10 3.4,14.4 6,21.6 4,23.6" fill="#f57e20"/><polygon points="13.4,1 24.6,6.6 20,21 13,23" fill="#3a7cf0"/><polygon points="18,12 25,12.4 16,23.8 12,20" fill="#1a56c8"/><polygon points="4,23.6 7,14 11,19" fill="#b23fd0"/><rect x="6" y="5.4" width="13.6" height="13.6" fill="#000"/><text x="7.4" y="12.8" font-family="Liberation Sans,sans-serif" font-size="6.6" font-weight="bold" fill="#fff">IJ</text><rect x="7.6" y="15.8" width="5" height="1.1" fill="#fff"/></svg>
<!-- editor -->
<svg class="abs" style="left:411px;top:8px" width="24" height="26" viewBox="0 0 24 26"><defs><linearGradient id="npg" x1="0" y1="0" x2="0" y2="1"><stop offset="0" stop-color="#fbfbf2"/><stop offset=".4" stop-color="#e4f2b8"/><stop offset="1" stop-color="#5cc226"/></linearGradient></defs><path d="M1,1 H15 L20,6 V25 H1 Z" fill="url(#npg)" stroke="#c8c8c0" stroke-width=".6"/><path d="M15,1 V6 H20" fill="#e8e8e0" stroke="#bdbdb5" stroke-width=".6"/><path d="M5.4,8 V18 M4,8 H6.8 M4,18 H6.8" stroke="#444" stroke-width="1"/><path d="M9,13 H12" stroke="#555" stroke-width="1" stroke-dasharray="1 1"/><path d="M21,2.4 L23.2,4 L13,19.4 L10,21 L10.8,17.8 Z" fill="#f2a02a" stroke="#a86a10" stroke-width=".5"/><path d="M10,21 L10.6,18.6 L12.2,19.8 Z" fill="#333"/><path d="M21,2.4 L23.2,4 L22.2,5.6 L20,4 Z" fill="#e86a5a"/></svg>
<!-- tray -->
<div class="abs" style="left:1111px;top:10px;font-size:12px;line-height:18px;color:#d6d6d6;white-space:nowrap">文档</div>
<svg class="abs" style="left:1143px;top:6px" width="10" height="8" viewBox="0 0 10 8"><path d="M1,0.8 L4,3.8 L1,6.8 M5.4,0.8 L8.4,3.8 L5.4,6.8" fill="none" stroke="#fff" stroke-width="1.2"/></svg>
<svg class="abs" style="left:1175px;top:11px" width="17" height="17" viewBox="0 0 17 17"><g fill="none" stroke="#fff" stroke-width="1.2"><circle cx="11.4" cy="4.2" r="2.9"/><path d="M7.4,12.6 C7.6,9.6 9.2,8.2 11.4,8.2 C13.6,8.2 15.4,9.6 15.6,12.4"/><circle cx="5.4" cy="8.8" r="2.5"/><path d="M1,16.2 C1.2,13.6 2.8,12.2 5.4,12.2 C8,12.2 9.6,13.6 9.8,16.2"/></g></svg>
<svg class="abs" style="left:1212px;top:16px" width="14" height="8" viewBox="0 0 14 8"><path d="M1,7 L7,1.2 L13,7" fill="none" stroke="#fff" stroke-width="1.3"/></svg>
<svg class="abs" style="left:1234px;top:14px" width="19" height="12" viewBox="0 0 19 12"><rect x="5.6" y="1.4" width="11.4" height="8.4" fill="none" stroke="#fff" stroke-width="1.1"/><rect x="17" y="3.8" width="1.4" height="3.6" fill="#fff"/><rect x="7" y="5.2" width="8.6" height="3.4" fill="#fff"/><path d="M1,2 V4 M3.6,2 V4 M0.4,4.2 H4.2 V6 Q4.2,7.6 2.3,7.6 Q0.4,7.6 0.4,6 Z M2.3,7.6 V10.6 H6" fill="none" stroke="#fff" stroke-width="1"/></svg>
<svg class="abs" style="left:1261px;top:13px" width="15" height="15" viewBox="0 0 15 15"><g fill="none" stroke="#fff"><path d="M1.2,13.4 A12,12 0 0 1 13.2,1.4" stroke-width="1" opacity=".9"/><path d="M4.6,13.4 A8.6,8.6 0 0 1 13.2,4.8" stroke-width="1" opacity=".9"/><path d="M8,13.4 A5.2,5.2 0 0 1 13.2,8.2" stroke-width="1" opacity=".55"/></g><circle cx="12" cy="12.2" r="1.4" fill="#fff" opacity=".6"/></svg>
<svg class="abs" style="left:1282px;top:12px" width="19" height="16" viewBox="0 0 19 16"><path d="M1,5.6 H3.8 L7.6,2 V14 L3.8,10.4 H1 Z" fill="none" stroke="#fff" stroke-width="1.1" stroke-linejoin="round"/><g fill="none" stroke="#fff" stroke-width="1"><path d="M9.8,5.6 Q11.2,8 9.8,10.4"/><path d="M12,3.8 Q14.4,8 12,12.2"/><path d="M14.4,2 Q17.8,8 14.4,14"/></g></svg>
<div class="abs" style="left:1306px;top:10px;font-size:14.5px;line-height:18px;font-weight:bold;color:#fff;white-space:nowrap;font-family:'Noto Sans CJK SC',sans-serif">中</div>
<svg class="abs" style="left:1335px;top:12px" width="17" height="16" viewBox="0 0 17 16"><rect x="0.4" y="0.4" width="16.2" height="15.2" rx="2" fill="#ef5a26"/><g fill="none" stroke="#fff" stroke-width="1.2" stroke-linecap="round"><path d="M3.6,4 H13.6"/><path d="M12.6,4.2 C11,8.6 8,11.6 3.4,13"/><path d="M6.6,7 C9.6,7 12.6,8.6 13.6,12.6"/></g></svg>
<div class="abs" style="left:1360px;top:0;width:1px;height:40px;background:#5a646c"></div>
</div>
</body>
</html>
